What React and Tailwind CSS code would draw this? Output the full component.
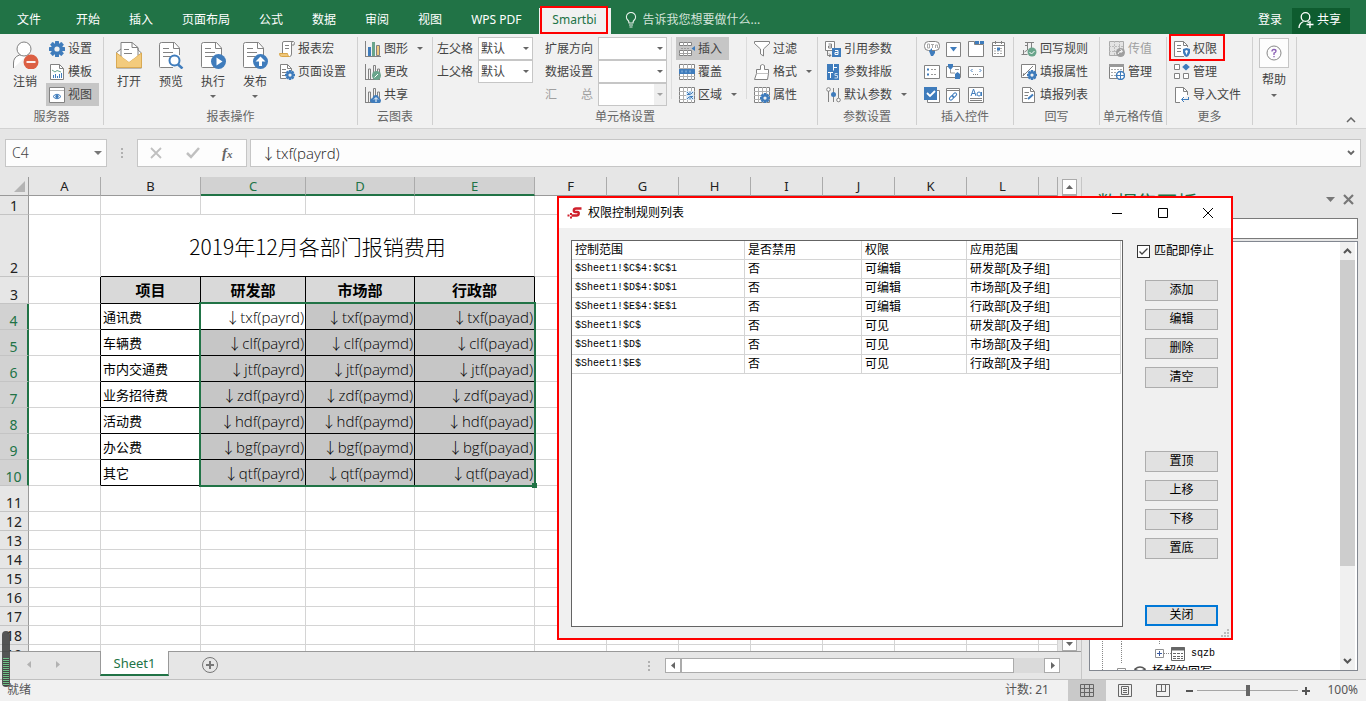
import React, { useState } from 'react';
import { clsx } from 'clsx';

const GRAY = '#828282';
const BLUE = '#3f7cbc';
const GREEN = '#6aa58c';

/* ---------- icons ---------- */

const Svg = ({ size = 16, children }) => (
  <svg width={size} height={size} viewBox={`0 0 ${size} ${size}`} fill="none" stroke={GRAY} className="shrink-0" aria-hidden="true">
    {children}
  </svg>
);

const Gear = ({ cx, cy, r }) => (
  <g transform={`translate(${cx} ${cy}) scale(${r / 8})`} stroke="none">
    <g fill={BLUE}>
      <circle r="6" />
      {[0, 45, 90, 135].map((a) => (
        <rect key={a} x="-2" y="-8" width="4" height="16" rx="0.5" transform={`rotate(${a})`} />
      ))}
    </g>
    <circle r="2.6" fill="#f1f1f1" />
  </g>
);

const Arrow = ({ className }) => (
  <svg width="6" height="3" viewBox="0 0 6 3" className={clsx('shrink-0', className)} fill="#666" aria-hidden="true">
    <path d="M0 0h6L3 3z" />
  </svg>
);

const GridLines = () => (
  <>
    <path d="M0.5 0.5h15v15h-15z" fill="#fff" />
    <path d="M0 4.5h16M0 8.5h16M0 12.5h16M4.5 0v16M8.5 0v16M12.5 0v16" stroke="#b0b0b0" />
  </>
);

const Bars = () => <path d="M0.5 0v15M0 15.5h15M3.5 15V5h2v10M8.5 15V1.5h2V15M12.5 15V5h2v10" />;

const icons = {
  settings: <Svg><Gear cx={8} cy={8} r={8} /></Svg>,
  template: (
    <Svg>
      <path d="M1.5 0.5h9l4 4v11h-13z" fill="#fff" />
      <path d="M10.5 0.5v4h4" />
      <path d="M3 6l3 2 2-1.500 4 1.500" stroke={GREEN} />
      <path d="M4.500 14v-3M6.500 14v-4M8.500 14v-2M10.500 14v-4M12.500 14v-5" stroke={BLUE} />
    </Svg>
  ),
  view: (
    <Svg>
      <path d="M0.5 0.5h15v15h-15z" fill="#fff" />
      <path d="M1 3.500h14" stroke="#bbb" />
      <path d="M4 9.500q4-4.500 8 0q-4 4.500-8 0z" stroke={BLUE} />
      <circle cx="8" cy="9.500" r="1.700" fill={BLUE} stroke="none" />
    </Svg>
  ),
  macro: (
    <Svg>
      <path d="M3.500 12V2q0-1.500 1.500-1.500h9.500q1.500 0 0.500 3.500h-2.500v9q0 2.500-2 2.500" fill="#fff" />
      <path d="M12.500 4V2q0-1.500 1.500-1.500M6 4.500h4M6 7.500h4" />
      <path d="M0.500 12.500h8q0 3 2 3h-8q-2 0-2-3z" fill="#efc77c" stroke="#d9a648" />
    </Svg>
  ),
  pageSetup: (
    <Svg>
      <path d="M7 14.500H1.500v-14h7l4 4V7" fill="#fff" />
      <path d="M8.500 0.500v4h4M3 5.500h4M3 8.500h4M3 11.500h3" />
      <Gear cx={11} cy={11} r={5} />
    </Svg>
  ),
  chart: (
    <Svg>
      <path d="M0.500 0v15M0 15.500h16" />
      <path d="M3 15V6h3v9z" fill={BLUE} stroke="none" />
      <path d="M7 15V1h3v14z" fill={GREEN} stroke="none" />
      <path d="M11.500 14.500V4.500h3v10z" fill="#efc77c" />
    </Svg>
  ),
  chartEdit: (
    <Svg>
      <Bars />
      <circle cx="11.500" cy="11.500" r="4.500" fill={GREEN} stroke="none" />
      <path d="M9.500 13.500l3.500-3.500" stroke="#fff" />
    </Svg>
  ),
  chartShare: (
    <Svg>
      <Bars />
      <path d="M8 16q-3 0-3-2.500 0-2 2.500-2.500Q8 8 11 8q2.500 0 3 3 2 .5 2 2.500 0 2.500-2 2.500z" fill={BLUE} stroke="none" />
      <path d="M11 15v-4M9 12.500l2-2 2 2" stroke="#fff" />
    </Svg>
  ),
  insert: (
    <Svg>
      <path d="M0.500 1.500h12v3h-12zM0.500 9.500h12v5h-12z" fill="#fff" />
      <path d="M4.500 1v4M8.500 1v4M4.500 9v6M8.500 9v6M0 12.500h12" stroke="#a0a0a0" />
      <path d="M2 7.500h8" strokeDasharray="2 1" stroke="#999" />
      <path d="M16 5v5l-3.500-2.500z" fill={BLUE} stroke="none" />
    </Svg>
  ),
  cover: (
    <Svg>
      <GridLines />
      <path d="M0 5h16v5H0z" fill={BLUE} stroke="none" />
      <path d="M3 6.500v2M7 6.500v2M11 6.500v2" stroke="#9fc1e2" />
    </Svg>
  ),
  area: (
    <Svg>
      <GridLines />
      <path d="M7 4h8v9H7z" fill="#dce9f5" stroke="none" />
      <path d="M8 5l2.500 2.500M14 5l-2.500 2.500M8 12l2.500-2.500M14 12l-2.500-2.500M8 7.500h3v-3M14 9.500h-3v3" stroke={BLUE} />
    </Svg>
  ),
  filter: <Svg><path d="M0.500 0.500h15v2l-6 5.500v7l-3-2V8l-6-5.500z" fill="#fff" /></Svg>,
  format: (
    <Svg>
      <path d="M6.500 5.500v-4q2-2 4 0v4h4v4h-12v-4z" fill="#fff" />
      <path d="M2.500 9.500l-2 6h13l1-6" fill="#fff" />
    </Svg>
  ),
  property: <Svg><GridLines /><Gear cx={11} cy={11} r={5} /></Svg>,
  refParam: (
    <Svg>
      <path d="M0.500 0.500h9v9h-9z" fill="#fff" />
      <path d="M3.500 3h3v4h-3v-2h3" />
      <path d="M2.500 10v4.500H6M4 12.500l2 2-2 1.500" />
      <path d="M7 7h9v9H7z" fill={BLUE} stroke="none" />
      <path d="M10 9.500h3v4h-3v-2h3" stroke="#fff" />
    </Svg>
  ),
  paramLayout: (
    <Svg>
      <path d="M2 0h12v16H2z" fill={BLUE} stroke="none" />
      <path d="M8.500 0v6.500M8.500 3.500H12M3 8.500h5M5.500 8.500V14" stroke="#fff" />
      <path d="M12.500 9.500H10v2h2.500v2.500H9.500" stroke="#c6dbef" />
    </Svg>
  ),
  paramDefault: (
    <Svg>
      <path d="M3.500 4v11M8.500 1v14M13.500 1v10" />
      <circle cx="3.500" cy="2.500" r="1.800" fill="#fff" />
      <circle cx="13.500" cy="13" r="1.800" fill="#fff" />
      <circle cx="8.500" cy="7.500" r="2.500" fill={BLUE} stroke="none" />
    </Svg>
  ),
  writeRule: (
    <Svg>
      <path d="M4 1.500h9M6.500 2v7l-3 2M10.500 2v5M4 4.500h3M0.500 13.500h6M2.500 13V9" />
      <circle cx="11" cy="11" r="4.500" fill={GREEN} stroke="none" />
      <path d="M8.500 11l2 2 3-3" stroke="#fff" />
    </Svg>
  ),
  fillProperty: (
    <Svg>
      <path d="M0.500 0.500h14v13h-14z" fill="#fff" />
      <path d="M2 12L12 2M2 12l1-3" />
      <Gear cx={11} cy={11} r={5} />
    </Svg>
  ),
  fillList: (
    <Svg>
      <path d="M1.500 0.500h8l4 4v11h-12z" fill="#fff" />
      <path d="M9.500 0.500v4h4M3.500 5.500H8M3.500 8.500H7M3.500 11.500H6" />
      <path d="M7 12l5-4.500" stroke={BLUE} strokeWidth="2" />
    </Svg>
  ),
  passValue: (
    <Svg>
      <path d="M0.500 0.500h14v14h-14z" fill="#e4e4e4" stroke="#aaa" />
      <path d="M0 5.500h15M0 10.500h15M5.500 0v15M10.500 0v15" stroke="#bbb" strokeDasharray="2 1" />
      <circle cx="11.500" cy="11.500" r="4.500" fill="#9f9f9f" stroke="none" />
      <path d="M9 13q1-3 4-3M11.500 8.500l2 1.500-2 2" stroke="#fff" />
    </Svg>
  ),
  manageGrid: (
    <Svg>
      <path d="M0.500 0.500h14v14h-14z" fill="#fff" />
      <path d="M0 1.500h15" strokeWidth="3" stroke="#999" />
      <path d="M2 5.500h11M2 8.500h6M2 11.500h5" strokeDasharray="2 1" stroke="#aaa" />
      <circle cx="11.500" cy="11.500" r="4" fill="#fff" stroke={BLUE} strokeWidth="1.500" />
      <path d="M7.500 11.500h8M11.500 7.500v8" stroke={BLUE} />
    </Svg>
  ),
  permission: (
    <Svg>
      <path d="M10 15.500H0.500V0.500h9l4 4V6" fill="#fff" />
      <path d="M9.500 0.500v4h4M3 4.500h4M3 7.500h4M3 10.500h4" />
      <path d="M9 8l3.500-1L16 8v4q-1 3-3.500 4Q10 15 9 12z" fill={BLUE} stroke="none" />
      <path d="M12.500 9l1.500 1-1.500 4-1.500-4z" fill="#fff" stroke="none" />
    </Svg>
  ),
  manage: (
    <Svg>
      <path d="M0.500 0.500h5v5h-5zM0.500 9.500h5v5h-5zM9.500 9.500h5v5h-5z" fill="#fff" />
      <path d="M12 -0.500l3.800 3.500L12 6.500 8.200 3z" fill={BLUE} stroke="none" />
    </Svg>
  ),
  importFile: (
    <Svg>
      <path d="M6 15.500H1.500V0.500h8l4 4V8" fill="#fff" />
      <path d="M9.500 0.500v4h4" />
      <path d="M15 12.500H8M10 10l-2.500 2.500L10 15M14.500 10v2" stroke={BLUE} />
    </Svg>
  ),
};

const controlIcons = [
  ['按钮', <Svg key="a"><rect x="0.500" y="0.500" width="15" height="9" rx="4" fill="#fff" /><path d="M3.500 3v4h2V3zM7 3.500h3M8.500 3.500V7M11.500 7V4h2v3" stroke="#aaa" /><path d="M5 10l3-3v3h3v2l-2 3H7z" fill={BLUE} stroke="none" /></Svg>],
  ['下拉框', <Svg key="b"><path d="M0.500 1.500h14v14h-14z" fill="#fff" /><path d="M4 6h7l-3.500 4.500z" fill={BLUE} stroke="none" /></Svg>],
  ['标签页', <Svg key="c"><path d="M0.500 0.500h6v3h9v12h-15z" fill="#fff" /><path d="M7 0h4v3H7zM12 0h4v3h-4z" fill={BLUE} stroke="none" /></Svg>],
  ['日期', <Svg key="d"><path d="M2.500 1.500h12v14h-12zM2 4.500h13" fill="#fff" /><path d="M5.500 0v3M11.500 0v3" /><path d="M4 7.500h9M4 10h9M4 12.500h9" strokeDasharray="2 1" stroke="#aaa" /><path d="M7 6.500h3v3H7z" fill={BLUE} stroke="none" /></Svg>],
  ['列表', <Svg key="e"><path d="M0.500 1.500h15v13h-15z" fill="#fff" /><path d="M3 5.500h2M3 10.500h2" strokeWidth="2" stroke={BLUE} /><path d="M7 5.500h6M7 10.500h6" stroke="#999" strokeDasharray="2 1" /></Svg>],
  ['树', <Svg key="f"><path d="M0.500 2.500h14v11h-14z" fill="#fff" /><path d="M2 0h5v3L4.500 6 2 3zM9 10l2.500-2L14 10v5H9z" fill={BLUE} stroke="none" /><path d="M4.500 6v3H9M9 5.500h4" stroke="#999" /></Svg>],
  ['滑块', <Svg key="g"><path d="M0.500 2.500h15v11h-15z" fill="#fff" /><path d="M4.500 5L3 6.500 4.500 8M11.500 5L13 6.500 11.500 8" stroke={BLUE} /><path d="M5 10.500h6" strokeDasharray="1 1" /></Svg>],
  null,
  ['复选框', <Svg key="h"><path d="M3.500 3.500h12v12h-12z" fill="#fff" /><path d="M0 0h13v13H0z" fill={BLUE} stroke="none" /><path d="M3 6l3 3 5-5" stroke="#fff" strokeWidth="1.800" /></Svg>],
  ['链接', <Svg key="i"><path d="M0.500 1.500h13v14h-13zM0.500 3.500h13" fill="#fff" /><g stroke={BLUE} transform="rotate(-45 7 9.500)"><rect x="2.500" y="8" width="5" height="3" rx="1.500" /><rect x="6.500" y="8" width="5" height="3" rx="1.500" /></g></Svg>],
  ['文本', <Svg key="j"><path d="M0.500 0.500h15v15h-15z" fill="#fff" /><path d="M3 9l2.500-7L8 9M4 6.500h3" stroke={BLUE} /><circle cx="11" cy="7" r="2" stroke={BLUE} /><path d="M13.500 5v4" stroke={BLUE} /><path d="M2 11.500h12M2 13.500h12" /></Svg>],
  null,
];

const Doc = ({ children }) => (
  <Svg size={28}>
    <path d="M16 26.500H3.500q-1 0-1-1v-22q0-2 2-2h13l5 5.500V14" fill="#fff" />
    <path d="M16.500 1.500v6h6M6 7.500h6M6 11.500h10M6 15.500h8" />
    {children}
  </Svg>
);

const bigIcons = {
  logout: (
    <Svg size={28}>
      <path d="M2.500 27v-5q0-6 6-8h8" fill="#fff" />
      <circle cx="13" cy="8" r="7" fill="#fff" />
      <circle cx="20" cy="21" r="7.500" fill="#dc5f43" stroke="none" />
      <path d="M15.500 21h9" stroke="#fff" strokeWidth="1.800" />
    </Svg>
  ),
  open: (
    <Svg size={28}>
      <path d="M1.500 11.500L6 8V1.500h11l6 5V9l3.500 3v15h-25z" fill="#fff" />
      <path d="M17 1.500v5h6M9 8.500h5M9 12.500h8M9 16.500h8" />
      <path d="M1.500 12l12.500 9 12.500-9v14.500h-25z" fill="#f3cb7d" stroke="#d9aa54" />
      <path d="M6 15V8M23 14V7" />
      <path d="M6.500 15.500L14 21l8-6z" fill="#fff" stroke="none" />
    </Svg>
  ),
  preview: (
    <Doc>
      <circle cx="17.500" cy="19.500" r="5" fill="#fff" stroke={BLUE} strokeWidth="2" />
      <path d="M21 23.500l4.500 4" stroke={BLUE} strokeWidth="2.500" />
    </Doc>
  ),
  run: (
    <Doc>
      <circle cx="19.500" cy="20.500" r="7.500" fill={BLUE} stroke="none" />
      <path d="M17.500 16.500v8l6-4z" fill="#fff" stroke="none" />
    </Doc>
  ),
  publish: (
    <Doc>
      <circle cx="19.500" cy="20.500" r="7.500" fill={BLUE} stroke="none" />
      <path d="M19.500 15.500l5 5H21v4.500h-3v-4.500h-3.500z" fill="#fff" stroke="none" />
    </Doc>
  ),
};

/* ---------- ribbon ---------- */

const menus = ['开始', '插入', '页面布局', '公式', '数据', '审阅', '视图', 'WPS PDF'];

const TopBar = () => (
  <header className="flex h-[34px] shrink-0 items-stretch bg-[#217346] text-xs text-white">
    <nav className="flex items-center pt-[5px]">
      <button className="mr-[35px] ml-[17px]">文件</button>
      <div className="flex gap-[29px]">
        {menus.map((m) => (
          <button key={m} className="whitespace-nowrap">{m}</button>
        ))}
      </div>
    </nav>
    <button className="relative mt-2 ml-[17px] w-[72px] bg-[#f1f1f1] pb-[2px] text-[#217346]">
      Smartbi
      <span className="absolute -top-[2px] left-px h-[28px] w-[68px] border-2 border-[#fe0000]" />
    </button>
    <label htmlFor="tell-me" className="ml-[14px] flex grow items-center gap-[6px] pt-[6px] text-[#d3e3da]">
      <svg width="12" height="16" viewBox="0 0 12 16" fill="none" stroke="#e6f0ea" strokeWidth="1.200">
        <path d="M4 11Q4 9 2.500 7.800A4.500 4.500 0 1 1 9.500 7.800Q8 9 8 11zM4 13h4M4.500 15h3" />
      </svg>
      <input id="tell-me" placeholder="告诉我您想要做什么..." className="w-40 bg-transparent outline-none placeholder:text-[#d3e3da]" />
    </label>
    <button className="mr-[10px] pt-[5px]">登录</button>
    <button className="mt-2 mr-4 flex w-[58px] items-center gap-[3px] bg-[#0e5c2f] pb-[2px] pl-[6px]">
      <svg width="16" height="16" viewBox="0 0 16 16" fill="none" stroke="#fff" strokeWidth="1.300">
        <circle cx="7.500" cy="5" r="4.300" />
        <path d="M1 16q0-4.500 4.500-6.500M9.500 9.500l1.500 1M8.500 12.500h7M12 9v7" />
      </svg>
      共享
    </button>
  </header>
);

const Group = ({ label, width, children }) => (
  <section className={clsx('my-[3px] flex shrink-0 flex-col border-r border-[#d0d0d0] text-xs text-[#444]', width)}>
    <div className="flex h-[72px] shrink-0 items-start">{children}</div>
    <h2 className="text-center leading-4 whitespace-nowrap text-[#666]">{label}</h2>
  </section>
);

const Tool = ({ icon, label, active, disabled, arrow, marked }) => (
  <button
    disabled={disabled}
    className={clsx(
      'relative flex h-[23px] items-center gap-[3px] pr-[7px] pl-[3px] whitespace-nowrap',
      active && 'bg-[#c6c6c6]',
      disabled && 'text-[#a0a0a0]'
    )}
  >
    {icons[icon]}
    <span>{label}</span>
    {arrow && <Arrow className="ml-[6px]" />}
    {marked && <span className="absolute -top-[3px] -right-px -bottom-px -left-[2px] border-2 border-[#fe0000]" />}
  </button>
);

const BigTool = ({ icon, label, arrow }) => (
  <button className="flex w-[42px] flex-col items-center pt-1">
    {bigIcons[icon]}
    <span className="mt-[5px] leading-4">{label}</span>
    {arrow && <Arrow className="mt-[5px]" />}
  </button>
);

const Pick = ({ id, value = '', width, disabled }) => (
  <span className={clsx('relative flex h-[23px]', width)}>
    <select
      id={id}
      defaultValue={value}
      disabled={disabled}
      className="w-full appearance-none border border-[#c6c6c6] bg-white pl-[2px] text-xs text-[#444]"
    >
      <option value={value}>{value}</option>
    </select>
    <span className={clsx('pointer-events-none absolute inset-y-px right-px flex w-3 items-center justify-center', disabled && 'bg-[#e6e6e6] opacity-60')}>
      <Arrow />
    </span>
  </span>
);

const Ribbon = () => (
  <div className="relative flex h-[95px] shrink-0 border-b border-[#d2d2d2] bg-[#f1f1f1]">
    <Group label="服务器" width="w-[104px]">
      <div className="pl-1"><BigTool icon="logout" label="注销" /></div>
      <div className="flex flex-col">
        <Tool icon="settings" label="设置" />
        <Tool icon="template" label="模板" />
        <Tool icon="view" label="视图" active />
      </div>
    </Group>
    <Group label="报表操作" width="w-[254px]">
      <div className="flex pl-1">
        <BigTool icon="open" label="打开" />
        <BigTool icon="preview" label="预览" />
        <BigTool icon="run" label="执行" arrow />
        <BigTool icon="publish" label="发布" arrow />
      </div>
      <div>
        <Tool icon="macro" label="报表宏" />
        <Tool icon="pageSetup" label="页面设置" />
      </div>
    </Group>
    <Group label="云图表" width="w-[75px]">
      <div className="pl-1">
        <Tool icon="chart" label="图形" arrow />
        <Tool icon="chartEdit" label="更改" />
        <Tool icon="chartShare" label="共享" />
      </div>
    </Group>
    <Group label="单元格设置" width="w-[385px]">
      <div className="grid grid-cols-[41px_55px] items-center pl-1">
        <label htmlFor="left-parent">左父格</label>
        <Pick id="left-parent" value="默认" width="w-[55px]" />
        <label htmlFor="top-parent">上父格</label>
        <Pick id="top-parent" value="默认" width="w-[55px]" />
      </div>
      <div className="grid grid-cols-[53px_69px] items-center pl-3">
        <label htmlFor="expand">扩展方向</label>
        <Pick id="expand" width="w-[69px]" />
        <label htmlFor="data-set">数据设置</label>
        <Pick id="data-set" width="w-[69px]" />
        <label htmlFor="summary" className="flex w-12 justify-between text-[#a0a0a0]">
          <span>汇</span>
          <span>总</span>
        </label>
        <Pick id="summary" width="w-[69px]" disabled />
      </div>
      <div className="ml-1 h-[62px] border-l border-[#dcdcdc] pl-1">
        <Tool icon="insert" label="插入" active />
        <Tool icon="cover" label="覆盖" />
        <Tool icon="area" label="区域" arrow />
      </div>
      <div className="ml-[2px] h-[62px] border-l border-[#dcdcdc] pl-1">
        <Tool icon="filter" label="过滤" />
        <Tool icon="format" label="格式" arrow />
        <Tool icon="property" label="属性" />
      </div>
    </Group>
    <Group label="参数设置" width="w-[99px]">
      <div className="pl-1">
        <Tool icon="refParam" label="引用参数" />
        <Tool icon="paramLayout" label="参数排版" />
        <Tool icon="paramDefault" label="默认参数" arrow />
      </div>
    </Group>
    <Group label="插入控件" width="w-[97px]">
      <div className="grid grid-cols-[repeat(4,22px)] pl-[7px]">
        {controlIcons.map((c, i) =>
          c ? (
            <button key={i} aria-label={c[0]} className="flex h-[23px] items-center">{c[1]}</button>
          ) : (
            <span key={i} />
          )
        )}
      </div>
    </Group>
    <Group label="回写" width="w-[86px]">
      <div className="pl-1">
        <Tool icon="writeRule" label="回写规则" />
        <Tool icon="fillProperty" label="填报属性" />
        <Tool icon="fillList" label="填报列表" />
      </div>
    </Group>
    <Group label="单元格传值" width="w-[67px]">
      <div className="pl-[6px]">
        <Tool icon="passValue" label="传值" disabled />
        <Tool icon="manageGrid" label="管理" />
      </div>
    </Group>
    <Group label="更多" width="w-[86px]">
      <div className="pl-1">
        <Tool icon="permission" label="权限" marked />
        <Tool icon="manage" label="管理" />
        <Tool icon="importFile" label="导入文件" />
      </div>
    </Group>
    <Group width="w-[44px]">
      <button className="flex w-[42px] flex-col items-center pt-px">
        <span className="flex size-[30px] items-center justify-center border border-[#c6c6c6] bg-[#fdfdfd]">
          <svg width="16" height="16" viewBox="0 0 16 16" fill="none" stroke="#888">
            <circle cx="8" cy="8" r="7" />
            <path d="M6 6.500q0-2 2-2t2 1.700q0 1-2 2V10M8 11v1.300" stroke="#8a5fb5" strokeWidth="1.300" />
          </svg>
        </span>
        <span className="mt-1 leading-4">帮助</span>
        <Arrow className="mt-[6px]" />
      </button>
    </Group>
    <button aria-label="折叠功能区" className="mt-auto mr-[10px] mb-[5px] ml-auto">
      <svg width="10" height="6" viewBox="0 0 10 6" fill="none" stroke="#666" strokeWidth="1.500">
        <path d="M1 5l4-4 4 4" />
      </svg>
    </button>
  </div>
);

const FormulaBar = () => (
  <div className="flex h-12 shrink-0 items-start bg-[#e6e6e6] pt-[10px] pr-[5px] pl-[5px]">
    <div className="flex h-7 w-[102px] items-center border border-[#c6c6c6] bg-[#fdfdfd] pr-1 pl-[6px]">
      <input aria-label="名称框" defaultValue="C4" className="w-full min-w-0 bg-transparent text-sm font-light text-[#444] outline-none" />
      <svg width="8" height="4" viewBox="0 0 8 4" className="shrink-0" fill="#777"><path d="M0 0h8L4 4z" /></svg>
    </div>
    <div className="flex h-7 w-[30px] flex-col items-center justify-center gap-[2px]">
      {[0, 1, 2].map((i) => <span key={i} className="size-[2px] bg-[#b0b0b0]" />)}
    </div>
    <div className="flex h-7 w-[110px] items-center border border-[#c6c6c6] bg-[#fdfdfd] pl-[12px]">
      <button aria-label="取消">
        <svg width="12" height="12" viewBox="0 0 12 12" stroke="#c0c0c0" strokeWidth="1.800"><path d="M1 1l10 10M11 1L1 11" /></svg>
      </button>
      <button aria-label="输入" className="ml-6">
        <svg width="14" height="12" viewBox="0 0 14 12" fill="none" stroke="#c0c0c0" strokeWidth="2.500"><path d="M1 6l4 4 8-9" /></svg>
      </button>
      <button className="ml-[22px] font-['Liberation_Serif',serif] text-[15px] font-bold text-[#666] italic">
        f<span className="text-[11px]">x</span>
      </button>
    </div>
    <div className="ml-[3px] flex h-7 grow items-center border border-[#c6c6c6] bg-[#fdfdfd] pr-[5px] pl-[10px]">
      <input aria-label="编辑栏" defaultValue="↓txf(payrd)" className="grow bg-transparent font-['Open_Sans','Noto_Sans_CJK_SC',sans-serif] text-[15px] font-light text-[#222] outline-none" />
      <svg width="8" height="6" viewBox="0 0 8 6" fill="none" stroke="#666" strokeWidth="1.800"><path d="M1 1l3 3 3-3" /></svg>
    </div>
  </div>
);

/* ---------- sheet ---------- */

const cols = ['A', 'B', 'C', 'D', 'E', 'F', 'G', 'H', 'I', 'J', 'K', 'L', ''];
const selectedCols = ['C', 'D', 'E'];
const items = [
  ['通讯费', 'txf'],
  ['车辆费', 'clf'],
  ['市内交通费', 'jtf'],
  ['业务招待费', 'zdf'],
  ['活动费', 'hdf'],
  ['办公费', 'bgf'],
  ['其它', 'qtf'],
];
const depts = ['payrd', 'paymd', 'payad'];
const blank = 'border-r border-b border-[#d4d4d4]';

const RowHead = ({ n, on }) => (
  <th
    className={clsx(
      'border-b border-b-[#c4c4c4] p-0 text-center align-bottom text-sm leading-[17px] font-normal',
      on ? 'border-r-2 border-r-[#217346] bg-[#d2d2d2] text-[#217346]' : 'border-r border-r-[#999] bg-[#e6e6e6] text-[#222]'
    )}
  >
    {n}
  </th>
);

const Blanks = ({ count }) => Array.from({ length: count }, (_, i) => <td key={i} className={blank} />);

const Sheet = () => (
  <div className="min-h-0 grow overflow-hidden bg-white">
    <table className="w-full table-fixed border-separate border-spacing-0">
      <colgroup>
        <col className="w-[29px]" />
        <col className="w-[72px]" />
        <col className="w-[100px]" />
        <col className="w-[105px]" />
        <col className="w-[109px]" />
        <col className="w-[120px]" />
        {cols.slice(5, 12).map((c) => <col key={c} className="w-[72px]" />)}
        <col />
      </colgroup>
      <thead>
        <tr className="h-[19px]">
          <th className="border-r border-b border-[#999] bg-[#e6e6e6] p-0">
            <svg width="11" height="11" viewBox="0 0 11 11" className="mt-px mr-[3px] ml-auto" fill="#b4b4b4"><path d="M11 0v11H0z" /></svg>
          </th>
          {cols.map((c, i) => (
            <th
              key={i}
              className={clsx(
                'border-r border-r-[#ababab] p-0 text-center text-[13px] leading-4 font-normal',
                selectedCols.includes(c)
                  ? 'border-b-2 border-b-[#217346] bg-[#d2d2d2] text-[#217346]'
                  : 'border-b border-b-[#999] bg-[#e6e6e6] text-[#222]'
              )}
            >
              {c}
            </th>
          ))}
        </tr>
      </thead>
      <tbody>
        <tr className="h-[19px]">
          <RowHead n={1} />
          <Blanks count={13} />
        </tr>
        <tr className="h-[62px]">
          <RowHead n={2} />
          <td className={blank} />
          <td colSpan={4} className="border-r border-b border-r-[#d4d4d4] border-b-black p-0 text-center font-['Noto_Sans_CJK_SC',sans-serif] text-[21px] leading-6 font-light text-black">
            2019年12月各部门报销费用
          </td>
          <Blanks count={8} />
        </tr>
        <tr className="h-[27px]">
          <RowHead n={3} />
          <td className="border-r border-b border-r-black border-b-[#d4d4d4]" />
          {['项目', '研发部', '市场部', '行政部'].map((t) => (
            <td key={t} className="border-r border-b border-black bg-[#d9d9d9] p-0 text-center text-[15px] leading-5 font-bold">{t}</td>
          ))}
          <Blanks count={8} />
        </tr>
        {items.map(([name, key], r) => (
          <tr key={key} className="h-[26px]">
            <RowHead n={r + 4} on />
            <td className="border-r border-b border-r-black border-b-[#d4d4d4]" />
            <td className="border-r border-b border-black p-0 pl-[2px] text-[13px] leading-5">{name}</td>
            {depts.map((d, c) => (
              <td
                key={d}
                className={clsx(
                  "relative border-r border-b border-black p-0 pt-px pr-px text-right font-['Open_Sans','Noto_Sans_CJK_SC',sans-serif] text-[15px] leading-5 font-light whitespace-nowrap text-black",
                  r + c > 0 && 'bg-[#c6c6c6]'
                )}
              >
                ↓{key}({d})
                {r + c === 0 && (
                  <span className="absolute -top-[2px] -left-[2px] z-10 h-[185px] w-[337px] border-2 border-[#217346]">
                    <span className="absolute -right-[3px] -bottom-[3px] size-[5px] bg-[#217346]" />
                  </span>
                )}
              </td>
            ))}
            <Blanks count={8} />
          </tr>
        ))}
        {[11, 12, 13, 14, 15, 16, 17, 18, 19].map((n) => (
          <tr key={n} className={n === 11 ? 'h-[26px]' : 'h-[19px]'}>
            <RowHead n={n} />
            <Blanks count={13} />
          </tr>
        ))}
      </tbody>
    </table>
  </div>
);

const Tri = ({ d }) => (
  <svg width="7" height="7" viewBox="0 0 7 7" fill="#666" aria-hidden="true"><path d={d} /></svg>
);

const SheetScroll = () => (
  <div className="flex w-[23px] shrink-0 flex-col items-center bg-[#e6e6e6] pt-[2px]">
    <button aria-label="向上滚动" className="flex h-4 w-[15px] shrink-0 items-center justify-center border border-[#ababab] bg-white"><Tri d="M0 5h7L3.500 1z" /></button>
    <div className="h-[340px] w-[15px] border border-[#ababab] bg-white" />
    <div className="w-[15px] grow bg-[#dadada]" />
    <button aria-label="向下滚动" className="flex h-4 w-[15px] shrink-0 items-center justify-center border border-[#ababab] bg-white"><Tri d="M0 2h7L3.500 6z" /></button>
  </div>
);

const SheetTabs = () => (
  <div className="flex h-7 shrink-0 border-t border-[#999] bg-[#e6e6e6]">
    <div className="flex w-[100px] items-center gap-[21px] pb-[2px] pl-[26px] opacity-40">
      <Tri d="M5 0v7L1 3.500z" />
      <Tri d="M2 0v7l4-3.500z" />
    </div>
    <button className="-mt-px h-[25px] w-[69px] border-x border-b-2 border-x-[#999] border-b-[#217346] bg-white pt-[2px] text-[13px] text-[#217346]">Sheet1</button>
    <button aria-label="新工作表" className="mb-[2px] ml-8 self-center">
      <svg width="18" height="18" viewBox="0 0 18 18" fill="none" stroke="#777"><circle cx="9" cy="9" r="7.500" /><path d="M5 9h8M9 5v8" strokeWidth="2" /></svg>
    </button>
    <div className="ml-auto flex items-center pr-[21px]">
      <div className="flex w-[25px] flex-col items-center gap-[2px] pr-[7px]">
        {[0, 1, 2].map((i) => <span key={i} className="size-[2px] shrink-0 bg-[#b0b0b0]" />)}
      </div>
      <div className="flex h-[15px] w-[395px] bg-[#dadada]">
        <button aria-label="向左滚动" className="flex w-4 shrink-0 items-center justify-center border border-[#ababab] bg-white"><Tri d="M5 0v7L1 3.500z" /></button>
        <div className="w-[333px] border border-[#ababab] bg-white" />
        <button aria-label="向右滚动" className="ml-auto flex w-4 items-center justify-center border border-[#ababab] bg-white"><Tri d="M2 0v7l4-3.500z" /></button>
      </div>
    </div>
  </div>
);

/* ---------- dataset pane ---------- */

const Plus = () => (
  <svg width="9" height="9" viewBox="0 0 9 9" fill="#fff" stroke="#919191"><path d="M0.500 0.500h8v8h-8z" /><path d="M2 4.500h5M4.500 2v5" stroke="#3b5aa0" /></svg>
);

const DataPane = () => (
  <aside className="flex w-[285px] shrink-0 flex-col border-l border-[#c6c6c6] bg-[#e6e6e6] pr-2 pb-2 pl-[7px]">
    <div className="flex h-[41px] shrink-0 items-center pt-1">
      <h2 className="pt-2 pl-2 text-xl text-[#217346]">数据集面板</h2>
      <button aria-label="面板选项" className="ml-auto"><svg width="9" height="5" viewBox="0 0 9 5" fill="#777"><path d="M0 0h9L4.500 5z" /></svg></button>
      <button aria-label="关闭面板" className="mr-1 ml-2">
        <svg width="11" height="11" viewBox="0 0 11 11" stroke="#777" strokeWidth="2.200"><path d="M1 1l9 9M10 1l-9 9" /></svg>
      </button>
    </div>
    <input aria-label="搜索" className="h-[21px] shrink-0 border border-[#7a7a7a] bg-white px-1 text-xs" />
    <div className="mt-[2px] flex min-h-0 grow border border-[#828790] bg-white">
      <div className="flex grow flex-col justify-end overflow-hidden font-['Liberation_Mono','Noto_Sans_CJK_SC',monospace] text-xs">
        <ul className="-mb-3 ml-3 border-l border-dotted border-[#888]">
          <li className="ml-[18px] flex h-[22px] border-l border-dotted border-[#888] pl-[37px]">
            <span className="border-l border-dotted border-[#888]" />
          </li>
          <li className="ml-[18px] flex h-[19px] items-center border-l border-dotted border-[#888] pl-[33px]">
            <Plus />
            <span className="w-[7px] border-t border-dotted border-[#888]" />
            <svg width="14" height="14" viewBox="0 0 14 14" fill="#fff" stroke="#666">
              <path d="M0.500 0.500h13v13H0.500z" />
              <path d="M0 2h14" strokeWidth="3" />
              <path d="M2 6.500h10M2 9.500h10M2 11.500h10" strokeDasharray="3 1" />
            </svg>
            <span className="ml-[6px] text-[10px]">sqzb</span>
          </li>
          <li className="flex h-[19px] items-center pl-[14px]">
            <Plus />
            <span className="w-2 border-t border-dotted border-[#888]" />
            <svg width="12" height="14" viewBox="0 0 12 14" fill="#fff" stroke="#555" strokeWidth="1.500"><path d="M1 3q5-4 10 0v8q-5 4-10 0zM1 3q5 4 10 0" /></svg>
            <span className="ml-[6px]">杨超的回写</span>
          </li>
        </ul>
      </div>
      <div className="mr-[2px] flex w-[15px] shrink-0 flex-col items-center bg-[#f0f0f0]">
        <svg width="9" height="6" viewBox="0 0 9 6" className="my-[6px] shrink-0" fill="none" stroke="#555" strokeWidth="2"><path d="M1 5l3.500-3.500L8 5" /></svg>
        <div className="h-[306px] w-full bg-[#cdcdcd]" />
        <svg width="9" height="6" viewBox="0 0 9 6" className="mt-auto mb-[6px] shrink-0" fill="none" stroke="#555" strokeWidth="2"><path d="M1 1l3.500 3.500L8 1" /></svg>
      </div>
    </div>
  </aside>
);

const StatusBar = () => (
  <footer className="flex h-[22px] shrink-0 items-center border-t border-[#c0c0c0] bg-[#f1f1f1] pl-[7px] text-xs text-[#555]">
    <span className="pb-[2px]">就绪</span>
    <span className="mr-[19px] ml-auto pb-[2px]">计数: 21</span>
    <button aria-label="普通" className="flex h-full w-[38px] items-center justify-center bg-[#c9c9c9]">
      <svg width="14" height="14" viewBox="0 0 14 14" fill="none" stroke="#666"><path d="M0.500 0.500h13v12h-13zM0 4.500h14M0 8.500h14M4.500 0v13M9.500 0v13" /></svg>
    </button>
    <button aria-label="页面布局" className="flex w-[38px] justify-center">
      <svg width="14" height="14" viewBox="0 0 14 14" fill="none" stroke="#666"><path d="M0.500 0.500h13v12h-13zM3.500 2.500h7v8h-7zM5 4.500h4M5 6.500h4M5 8.500h4" /></svg>
    </button>
    <button aria-label="分页预览" className="flex w-[38px] justify-center">
      <svg width="14" height="14" viewBox="0 0 14 14" fill="none" stroke="#666"><path d="M0.500 0.500h13v12h-13zM5.500 0v7M9.500 0v7M0 7.500h10" /></svg>
    </button>
    <button aria-label="缩小" className="ml-1 h-[2px] w-[7px] bg-[#555]" />
    <input
      type="range"
      aria-label="缩放"
      defaultValue="50"
      className="mx-1 h-3 w-[101px] appearance-none bg-[linear-gradient(#a6a6a6,#a6a6a6)] bg-[length:100%_1px] bg-center bg-no-repeat [&::-webkit-slider-thumb]:h-[11px] [&::-webkit-slider-thumb]:w-1 [&::-webkit-slider-thumb]:appearance-none [&::-webkit-slider-thumb]:bg-[#666]"
    />
    <button aria-label="放大">
      <svg width="8" height="8" viewBox="0 0 8 8" stroke="#555" strokeWidth="2"><path d="M0 4h8M4 0v8" /></svg>
    </button>
    <span className="mr-2 ml-4 w-8 pb-[2px] text-right">100%</span>
  </footer>
);

/* ---------- dialog ---------- */

const rules = [
  ['$Sheet1!$C$4:$C$1', '可编辑', '研发部[及子组]'],
  ['$Sheet1!$D$4:$D$1', '可编辑', '市场部[及子组]'],
  ['$Sheet1!$E$4:$E$1', '可编辑', '行政部[及子组]'],
  ['$Sheet1!$C$', '可见', '研发部[及子组]'],
  ['$Sheet1!$D$', '可见', '市场部[及子组]'],
  ['$Sheet1!$E$', '可见', '行政部[及子组]'],
];

const DialogButton = ({ children, primary }) => (
  <button className={clsx('h-[21px] w-[73px] bg-[#e1e1e1] pb-[2px] leading-4', primary ? 'border-2 border-[#0078d7]' : 'border border-[#adadad]')}>
    {children}
  </button>
);

const RulesDialog = () => {
  const [stopOnMatch, setStopOnMatch] = useState(true);
  const cell = 'border-r border-b border-[#d4d4d4] p-0 pl-[3px] text-left font-normal whitespace-nowrap';

  return (
    <div role="dialog" aria-label="权限控制规则列表" className="absolute top-[196px] left-[557px] z-20 flex h-[444px] w-[676px] flex-col border-2 border-[#fe0000] bg-[#f0f0f0] text-xs text-black">
      <div className="flex h-[30px] shrink-0 items-center bg-white pl-2">
        <svg width="15" height="12" viewBox="0 0 15 12" fill="none" stroke="#d0202c" aria-hidden="true">
          <path d="M14.500 1.500H9q-2 0-2.200 1.800T8.500 5h2q1.500 0 1.200 1.800T9.500 8.500H4.500" strokeWidth="2.400" />
          <path d="M3 6h2v2H3zM0.500 7.500h2v2h-2zM3 9.500h2v2H3z" fill="#d0202c" stroke="none" />
        </svg>
        <h1 className="ml-[6px]">权限控制规则列表</h1>
        <button aria-label="最小化" className="ml-auto flex w-[46px] justify-center"><svg width="10" height="10" viewBox="0 0 10 10" stroke="#000"><path d="M0 5.500h10" /></svg></button>
        <button aria-label="最大化" className="flex w-[45px] justify-center"><svg width="10" height="10" viewBox="0 0 10 10" fill="none" stroke="#000"><path d="M0.500 0.500h9v9h-9z" /></svg></button>
        <button aria-label="关闭窗口" className="flex w-[46px] justify-center"><svg width="10" height="10" viewBox="0 0 10 10" stroke="#000"><path d="M0 0l10 10M10 0L0 10" /></svg></button>
      </div>
      <div className="flex grow pt-3 pr-[13px] pb-[11px] pl-3">
        <div className="w-[552px] border border-[#646464] bg-white">
          <table className="w-[549px] table-fixed border-separate border-spacing-0 leading-4">
            <colgroup>
              <col className="w-[173px]" />
              <col className="w-[117px]" />
              <col className="w-[105px]" />
              <col />
            </colgroup>
            <thead>
              <tr className="h-[19px]">
                {['控制范围', '是否禁用', '权限', '应用范围'].map((h) => <th key={h} className={cell}>{h}</th>)}
              </tr>
            </thead>
            <tbody>
              {rules.map(([range, perm, scope]) => (
                <tr key={range} className="h-[19px]">
                  <td className={clsx(cell, "font-['Liberation_Mono',monospace] text-[10px]")}>{range}</td>
                  <td className={cell}>否</td>
                  <td className={cell}>{perm}</td>
                  <td className={cell}>{scope}</td>
                </tr>
              ))}
            </tbody>
          </table>
        </div>
        <div className="flex grow flex-col items-end">
          <label className="mt-px flex items-center gap-1 self-end leading-5">
            <span className="relative flex">
              <input
                type="checkbox"
                checked={stopOnMatch}
                onChange={(e) => setStopOnMatch(e.target.checked)}
                className="size-[13px] appearance-none border border-[#333] bg-white"
              />
              {stopOnMatch && (
                <svg width="13" height="13" viewBox="0 0 13 13" fill="none" stroke="#444" strokeWidth="1.300" className="pointer-events-none absolute inset-0"><path d="M2.500 6.500l2.500 2.500 5.500-5.500" /></svg>
              )}
            </span>
            <span className="mr-1">匹配即停止</span>
          </label>
          <div className="mt-[19px] flex flex-col gap-2">
            <DialogButton>添加</DialogButton>
            <DialogButton>编辑</DialogButton>
            <DialogButton>删除</DialogButton>
            <DialogButton>清空</DialogButton>
          </div>
          <div className="mt-[63px] flex flex-col gap-2">
            <DialogButton>置顶</DialogButton>
            <DialogButton>上移</DialogButton>
            <DialogButton>下移</DialogButton>
            <DialogButton>置底</DialogButton>
          </div>
          <div className="mt-auto mb-px flex">
            <DialogButton primary>关闭</DialogButton>
          </div>
        </div>
      </div>
      <svg width="8" height="8" viewBox="0 0 8 8" fill="#bbb" className="absolute right-[2px] bottom-px" aria-hidden="true">
        <path d="M6 0h2v2H6zM3 3h2v2H3zM6 3h2v2H6zM0 6h2v2H0zM3 6h2v2H3zM6 6h2v2H6z" />
      </svg>
    </div>
  );
};

export default function App() {
  return (
    <div className="relative flex h-screen flex-col overflow-hidden bg-[#e6e6e6] font-['Noto_Sans','Noto_Sans_CJK_SC',sans-serif]">
      <TopBar />
      <Ribbon />
      <FormulaBar />
      <main className="flex min-h-0 grow">
        <div className="flex min-w-0 grow flex-col">
          <div className="flex min-h-0 grow">
            <Sheet />
            <SheetScroll />
          </div>
          <SheetTabs />
        </div>
        <DataPane />
      </main>
      <StatusBar />
      <RulesDialog />

      {/* volume meter floating at the left edge */}
      <div className="absolute bottom-[14px] left-[2px] z-20 flex h-14 w-2 flex-col justify-end rounded bg-[#444]/90 p-px">
        <div className="h-7 bg-[repeating-linear-gradient(#6fc087_0_1px,#444_1px_2px)]" />
      </div>
    </div>
  );
}
